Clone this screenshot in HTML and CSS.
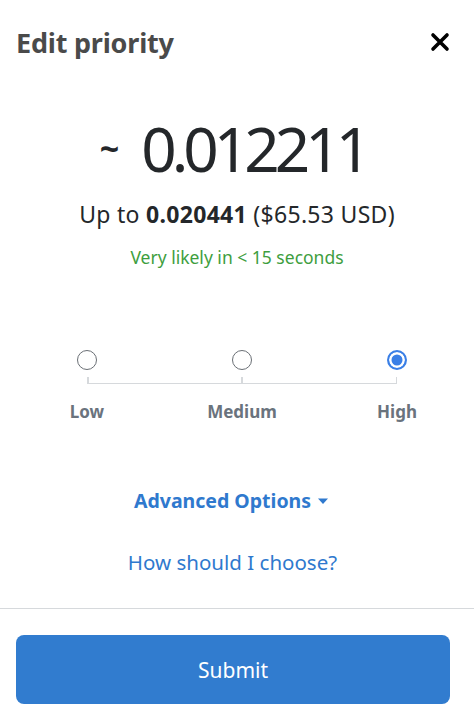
FILE: index.html
```html
<!DOCTYPE html>
<html>
<head>
  <meta charset="utf-8">
  <link rel="stylesheet" href="styles.css">
</head>
<body>
  <div class="popover">
    <div class="header">
      <h2 class="title">Edit priority</h2>
      <button class="close" aria-label="Close">
        <svg width="20" height="20" viewBox="0 0 20 20">
          <path d="M3 3 L17 17 M17 3 L3 17" stroke="#000" stroke-width="3.6" stroke-linecap="round"/>
        </svg>
      </button>
    </div>

    <div class="summary">
      <div class="amount"><span class="tilde">~</span>0.012211</div>
      <div class="max">Up to <b>0.020441</b> ($65.53 USD)</div>
      <div class="eta">Very likely in &lt; 15 seconds</div>
    </div>

    <div class="slider">
      <div class="radios">
        <label class="option"><span class="radio"></span></label>
        <label class="option"><span class="radio"></span></label>
        <label class="option"><span class="radio checked"></span></label>
      </div>
      <div class="track">
        <span class="tick"></span>
        <span class="tick"></span>
        <span class="tick"></span>
      </div>
      <div class="labels">
        <span>Low</span>
        <span>Medium</span>
        <span>High</span>
      </div>
    </div>

    <div class="links">
      <button class="advanced">Advanced Options
        <svg width="12" height="8" viewBox="0 0 12 8"><path d="M1 1.5 H11 L6 7 Z" fill="#2f79ce"/></svg>
      </button>
      <a class="help" href="#">How should I choose?</a>
    </div>

    <div class="footer">
      <button class="submit">Submit</button>
    </div>
  </div>
</body>
</html>
```

FILE: styles.css
```css
body {
  margin: 0;
  font-family: "Noto Sans", "Liberation Sans", sans-serif;
  background: #fff;
}

.popover {
  width: 474px;
  height: 727px;
  display: flex;
  flex-direction: column;
}

.header {
  display: flex;
  align-items: center;
  justify-content: space-between;
  padding: 26px 24px 0 16px;
}

.title {
  margin: 0;
  font-size: 27px;
  font-weight: 700;
  color: #4a4a4a;
  line-height: 34px;
  letter-spacing: -0.2px;
}

.close {
  border: none;
  background: none;
  padding: 0;
  display: block;
  cursor: pointer;
}

.summary {
  display: flex;
  flex-direction: column;
  align-items: center;
  margin-top: 53px;
}

.amount {
  font-size: 62px;
  line-height: 70px;
  color: #24272a;
  letter-spacing: -5px;
  display: flex;
  align-items: center;
  margin-right: 8px;
}

.tilde {
  font-size: 34px;
  font-weight: 700;
  margin-right: 22px;
  letter-spacing: 0;
}

.max {
  margin-top: 17px;
  font-size: 23px;
  line-height: 28px;
  letter-spacing: 0.3px;
  color: #24272a;
}

.max b {
  font-weight: 700;
}

.eta {
  margin-top: 17px;
  font-size: 17.5px;
  line-height: 24px;
  color: #3e9e3e;
}

.slider {
  margin-top: 81px;
  padding: 0 67px 0 77px;
}

.radios {
  display: flex;
  justify-content: space-between;
}

.option {
  display: block;
  width: 20px;
  height: 20px;
}

.radio {
  display: block;
  box-sizing: border-box;
  width: 20px;
  height: 20px;
  border-radius: 50%;
  border: 1.5px solid #6a6f75;
  background: #fff;
}

.radio.checked {
  border: 2px solid #3a7fe6;
  box-shadow: inset 0 0 0 2.5px #fff;
  background: #3a7fe6;
}

.track {
  margin: 7px 10px 0;
  height: 6px;
  border-bottom: 1.5px solid #d6d9dc;
  display: flex;
  justify-content: space-between;
}

.tick {
  width: 1.5px;
  height: 6px;
  background: #d6d9dc;
}

.labels {
  margin: 16px -30px 0;
  display: flex;
  justify-content: space-between;
  font-size: 17px;
  line-height: 24px;
  font-weight: 700;
  color: #6a737d;
}

.labels span {
  width: 80px;
  text-align: center;
}

.links {
  display: flex;
  flex-direction: column;
  align-items: center;
  margin-top: 64px;
}

.advanced {
  border: none;
  background: none;
  padding: 0;
  font-family: inherit;
  font-size: 19.5px;
  line-height: 26px;
  font-weight: 700;
  color: #2f79ce;
  display: flex;
  align-items: center;
  gap: 6px;
  cursor: pointer;
  margin-right: 11px;
}

.help {
  margin-top: 35px;
  font-size: 20.5px;
  line-height: 26px;
  color: #2f79ce;
  text-decoration: none;
  margin-right: 9px;
}

.footer {
  margin-top: 33px;
  border-top: 1.5px solid #d6d9dc;
  padding: 26px 24px 0 16px;
}

.submit {
  width: 100%;
  height: 69px;
  border: none;
  border-radius: 8px;
  background: #317ccf;
  color: #fff;
  font-family: inherit;
  font-size: 21px;
  cursor: pointer;
}
```
